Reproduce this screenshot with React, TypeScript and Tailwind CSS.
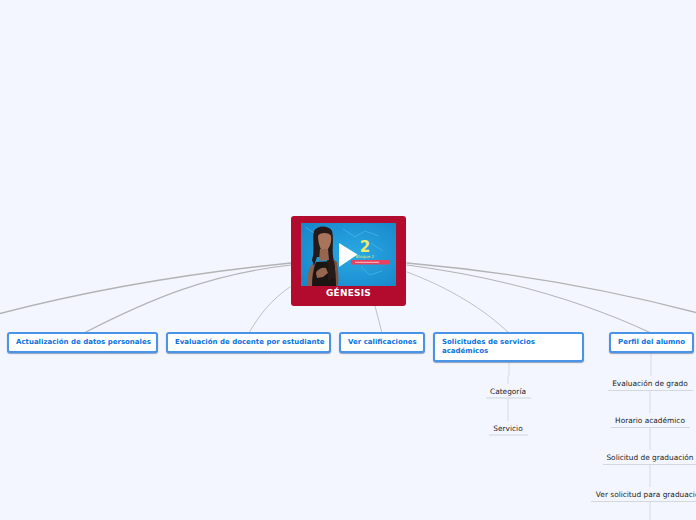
import React from 'react';

const font = "font-['DejaVu_Sans','Liberation_Sans',sans-serif]";

// Main branches under the central topic
const Branch = ({ className, children }: { className: string; children: React.ReactNode }) => (
  <div
    className={`absolute rounded-[3px] border-2 border-[#4a94e8] bg-white px-[7px] pt-[4px] text-[7px] font-bold leading-[9px] text-[#0a72de] shadow-[0_1px_1px_rgba(60,90,140,0.55)] ${className}`}
  >
    {children}
  </div>
);

// Sub topics are plain text on a light underline
const Leaf = ({ children, className = '' }: { children: React.ReactNode; className?: string }) => (
  <div
    className={`h-[15px] whitespace-nowrap pt-[2px] text-center text-[7.4px] leading-[11px] text-[#1c1c1c] ${className}`}
  >
    {children}
  </div>
);

const Thumbnail = () => (
  <svg viewBox="0 0 95 63" className="block h-[63px] w-[95px]">
    <defs>
      <radialGradient id="bg" cx="0.55" cy="0.5" r="0.75">
        <stop offset="0" stopColor="#2aa9e4" />
        <stop offset="1" stopColor="#1784c8" />
      </radialGradient>
    </defs>
    <rect width="95" height="63" fill="url(#bg)" />
    <g filter="blur(0.6px)">
      <path d="M42 6l12 8 10-6 14 5M60 44l9 8 12-4M4 4l9 6M70 20l12 8" stroke="#5cc6ee" strokeWidth="0.5" fill="none" />
      {/* presenter: arms, dress, hair, face, hand */}
      <path d="M7 63c-1-8 0-15 3-20l4-4 2 24z" fill="#8f604c" />
      <path d="M32 36l4 3c1 8 2 16 1 24h-5z" fill="#7d5240" />
      <path d="M11 63c0-8 1-17 4-24l18-1c1 8 2 17 2 25z" fill="#1a1412" />
      <path d="M13 8c3-6 15-6 18 0 2 8 0 17 1 25 1 8 3 15 2 22l-7 3-1-24H16l-3 9-2-6c3-9 0-21 2-29z" fill="#251a17" />
      <path d="M17 13c1-4 12-4 13 0 1 5-1 10-3 13-2 2-5 2-7 0-2-3-3-9-3-13z" fill="#a8745c" />
      <path d="M19 26h8l1 11-10 1z" fill="#96664f" />
      <path d="M15 50c1-4 7-6 10-5l2 5-5 4-6 1z" fill="#96664f" />
      <rect x="50" y="37" width="39" height="4.5" fill="#e8405f" />
      <rect x="54" y="38.8" width="24" height="1" fill="#f3c6cc" />
    </g>
    <path d="M38 20 L56.5 31.5 L38 44z" fill="#ffffff" />
    <text x="64" y="29" fontSize="15" fontWeight="700" fill="#ecec6e" fontFamily="'DejaVu Sans',sans-serif" textAnchor="middle">2</text>
    <text x="64" y="35" fontSize="4.2" fill="#dff07a" fontFamily="'DejaVu Sans',sans-serif" textAnchor="middle">Bloque 2</text>
  </svg>
);

export default function App() {
  return (
    <div className={`relative h-[520px] w-[696px] overflow-hidden bg-[#f3f6fe] ${font}`}>
      <svg viewBox="0 0 696 520" className="absolute inset-0 h-[520px] w-[696px]" fill="none">
        <g stroke="#b2b3b4" strokeLinecap="round">
          <path d="M291 263C190 273 90 290 -2 314" strokeWidth="1.3" />
          <path d="M291 265C210 274 150 299 84 333" strokeWidth="1.1" />
          <path d="M290 287C272 299 259 315 249 333" strokeWidth="0.8" />
          <path d="M375 306L382 333" strokeWidth="0.8" />
          <path d="M407 272C450 288 485 310 509 333" strokeWidth="0.8" />
          <path d="M407 265C500 277 580 300 651 333" strokeWidth="1.1" />
          <path d="M407 263C510 272 610 290 698 313" strokeWidth="1.3" />
        </g>
        <g stroke="#dde1e8" strokeWidth="1.3">
          <path d="M509 361V375L508 376V384" />
          <path d="M508 399V421" />
          <path d="M651 353V376" />
          <path d="M650 391V413" />
          <path d="M650 428V450" />
          <path d="M650 465V487" />
          <path d="M650 502V520" />
        </g>
      </svg>

      <div className="absolute left-[291px] top-[216px] flex h-[90px] w-[115px] flex-col items-center rounded-[3px] bg-[#b30b2e] pt-[7px]">
        <Thumbnail />
        <div className="mt-[2px] text-[9px] font-bold leading-[11px] tracking-[0.2px] text-white">GÉNESIS</div>
      </div>

      <Branch className="left-[7px] top-[332px] h-[21px] w-[151px] whitespace-nowrap">Actualización de datos personales</Branch>
      <Branch className="left-[166px] top-[332px] h-[21px] w-[165px] whitespace-nowrap">Evaluación de docente por estudiante</Branch>
      <Branch className="left-[339px] top-[332px] h-[21px] w-[86px] whitespace-nowrap">Ver calificaciones</Branch>
      <Branch className="left-[433px] top-[332px] h-[30px] w-[151px]">Solicitudes de servicios académicos</Branch>
      <Branch className="left-[609px] top-[332px] h-[21px] w-[85px] whitespace-nowrap">Perfil del alumno</Branch>

      {/* children of Solicitudes */}
      <div className="absolute left-[458px] top-[384px] flex w-[100px] flex-col items-center gap-[22px]">
        <Leaf className="w-[45px] border-b-2 border-[#e1e5ec]">Categoría</Leaf>
        <Leaf className="w-[39px] border-b-2 border-[#e1e5ec]">Servicio</Leaf>
      </div>

      {/* children of Perfil, the last one runs off the page */}
      <div className="absolute left-[590px] top-[376px] flex w-[120px] flex-col items-center gap-[22px]">
        <Leaf className="w-[85px] border-b border-[#d3d7de]">Evaluación de grado</Leaf>
        <Leaf className="w-[79px] border-b border-[#d3d7de]">Horario académico</Leaf>
        <Leaf className="w-[94px] border-b border-[#d3d7de]">Solicitud de graduación</Leaf>
        <Leaf className="w-[118px] border-b border-[#d3d7de]">Ver solicitud para graduación</Leaf>
      </div>
    </div>
  );
}
